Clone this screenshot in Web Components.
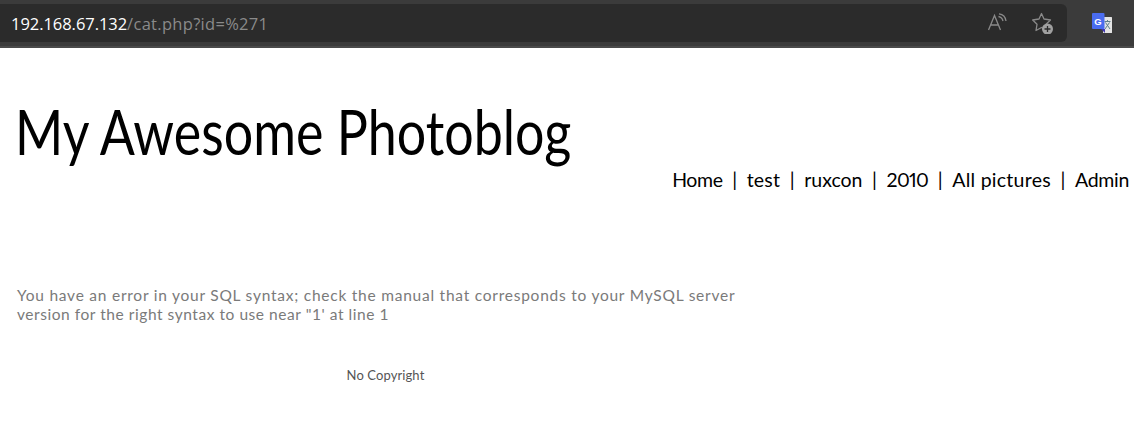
<!DOCTYPE html>
<html>
<head>
<meta charset="utf-8">
<title>My Awesome Photoblog</title>
<style>
    html, body { margin: 0; padding: 0; background: #fff; }
    body { width: 1134px; height: 432px; overflow: hidden; font-family: Lato, "Noto Sans", sans-serif; }
</style>
</head>
<body>
<browser-bar url-host="192.168.67.132" url-path="/cat.php?id=%271"></browser-bar>
<blog-header title="My Awesome Photoblog">
    <a href="#" style="letter-spacing:-.4px">Home</a>
    <a href="#" style="letter-spacing:.2px">test</a>
    <a href="#">ruxcon</a>
    <a href="#" style="letter-spacing:-.7px">2010</a>
    <a href="#" style="letter-spacing:.25px">All pictures</a>
    <a href="#" style="letter-spacing:-.3px">Admin</a>
</blog-header>
<blog-content><span style="letter-spacing:.76px">You have an error in your SQL syntax; check the manual that corresponds to your MySQL server</span> version for the right syntax to use near "1' at line 1</blog-content>
<blog-footer>No Copyright</blog-footer>

<script>
class BrowserBar extends HTMLElement {
    constructor() {
        super();
        this.attachShadow({mode: 'open'});
    }

    connectedCallback() {
        const host = this.getAttribute('url-host');
        const path = this.getAttribute('url-path');

        this.shadowRoot.innerHTML = `
            <style>
                :host {
                    display: flex;
                    align-items: center;
                    box-sizing: border-box;
                    height: 48px;
                    padding: 4px 0 4px 0;
                    background: #3b3b3b;
                    border-bottom: 2px solid #4a4a4a;
                }
                .address {
                    display: flex;
                    align-items: center;
                    justify-content: space-between;
                    box-sizing: border-box;
                    width: 1067px;
                    height: 38px;
                    padding: 0 13px 0 11px;
                    background: #2b2b2b;
                    border-radius: 0 6px 6px 0;
                }
                .url {
                    font: 16.5px "Open Sans", sans-serif;
                    color: #8a8a8a;
                    letter-spacing: .3px;
                }
                .url b { font-weight: 400; color: #fff; letter-spacing: -.05px; }
                .icons { display: flex; align-items: center; gap: 24px; }
                svg { display: block; }
                .ext { margin-left: 25px; }
            </style>
            <div class="address">
                <span class="url"><b>${host}</b>${path}</span>
                <div class="icons">
                    <svg width="20" height="20" viewBox="0 0 20 20" fill="none" stroke="#8a8a8a" stroke-width="1.3">
                        <path d="M0.5 17 L6.5 2.5 L12.5 17 M2.7 12 H10.3"/>
                        <path d="M10.5 3.5 C13 4 14.5 5.5 15 8 M11 0.8 C15 1.2 17.5 3.8 18 8"/>
                    </svg>
                    <svg width="22" height="22" viewBox="0 0 22 22" fill="none">
                        <path d="M9.5 1.5 L12 7 L18.5 8 L14 12.3 L15 18.5 L9.5 15.5 L4 18.5 L5 12.3 L0.7 8 L7 7 Z" stroke="#8a8a8a" stroke-width="1.3" stroke-linejoin="round"/>
                        <circle cx="15.5" cy="17" r="5.5" fill="#a0a0a0"/>
                        <path d="M15.5 14 V20 M12.5 17 H18.5" stroke="#2b2b2b" stroke-width="1.3"/>
                    </svg>
                </div>
            </div>
            <svg class="ext" width="20" height="20" viewBox="0 0 20 20">
                <rect x="11" y="4" width="9" height="16" rx="0.5" fill="#e4e4e4"/>
                <path d="M12.5 8.5 H18.5 M15.5 7 V8.5 M13 16 L17.5 9.5 M13.5 9.5 L18 16" stroke="#5f7f8a" stroke-width="1" fill="none"/>
                <path d="M9 16 L13 20 V16 Z" fill="#4338b0"/>
                <rect x="0" y="0" width="12.5" height="16" rx="1" fill="#4a6cf0"/>
                <text x="6" y="11.5" font-family="'Liberation Sans', sans-serif" font-size="9.5" font-weight="700" fill="#fff" text-anchor="middle">G</text>
            </svg>
        `;
    }
}

class BlogHeader extends HTMLElement {
    constructor() {
        super();
        this.attachShadow({mode: 'open'});
    }

    connectedCallback() {
        const title = this.getAttribute('title');

        this.shadowRoot.innerHTML = `
            <style>
                :host { display: block; height: 143px; }
                h1 {
                    margin: 0;
                    padding: 44px 0 0 15px;
                    font: 400 62px/78px Lato, sans-serif;
                    color: #000;
                }
                h1 span {
                    display: inline-block;
                    transform: scaleX(.838);
                    transform-origin: left center;
                    white-space: nowrap;
                }
                nav {
                    display: flex;
                    justify-content: flex-end;
                    padding: 0 5px 0 0;
                    margin-top: -2px;
                    font: 400 19.5px/24px Lato, sans-serif;
                    font-feature-settings: "pnum";
                }
                ::slotted(a) { color: #000; text-decoration: none; }
                .sep { margin: 0 9.6px; }
            </style>
            <h1><span>${title}</span></h1>
            <nav></nav>
        `;

        const nav = this.shadowRoot.querySelector('nav');
        const links = Array.from(this.children);
        links.forEach((link, i) => {
            const name = 'link' + i;
            link.setAttribute('slot', name);
            const slot = document.createElement('slot');
            slot.name = name;
            nav.appendChild(slot);
            if (i < links.length - 1) {
                const sep = document.createElement('span');
                sep.className = 'sep';
                sep.textContent = '|';
                nav.appendChild(sep);
            }
        });
    }
}

class BlogContent extends HTMLElement {
    constructor() {
        super();
        this.attachShadow({mode: 'open'});
        this.shadowRoot.innerHTML = `
            <style>
                :host {
                    display: block;
                    width: 725px;
                    margin-top: 95px;
                    padding-left: 17px;
                    font: 400 15.5px/19px Lato, sans-serif;
                    letter-spacing: .55px;
                    color: #7a7a7a;
                }
            </style>
            <slot></slot>
        `;
    }
}

class BlogFooter extends HTMLElement {
    constructor() {
        super();
        this.attachShadow({mode: 'open'});
        this.shadowRoot.innerHTML = `
            <style>
                :host {
                    display: block;
                    width: 771px;
                    margin-top: 43px;
                    text-align: center;
                    font: 400 13px/16px Lato, sans-serif;
                    letter-spacing: .1px;
                    color: #555;
                }
            </style>
            <slot></slot>
        `;
    }
}

customElements.define('browser-bar', BrowserBar);
customElements.define('blog-header', BlogHeader);
customElements.define('blog-content', BlogContent);
customElements.define('blog-footer', BlogFooter);
</script>
</body>
</html>
